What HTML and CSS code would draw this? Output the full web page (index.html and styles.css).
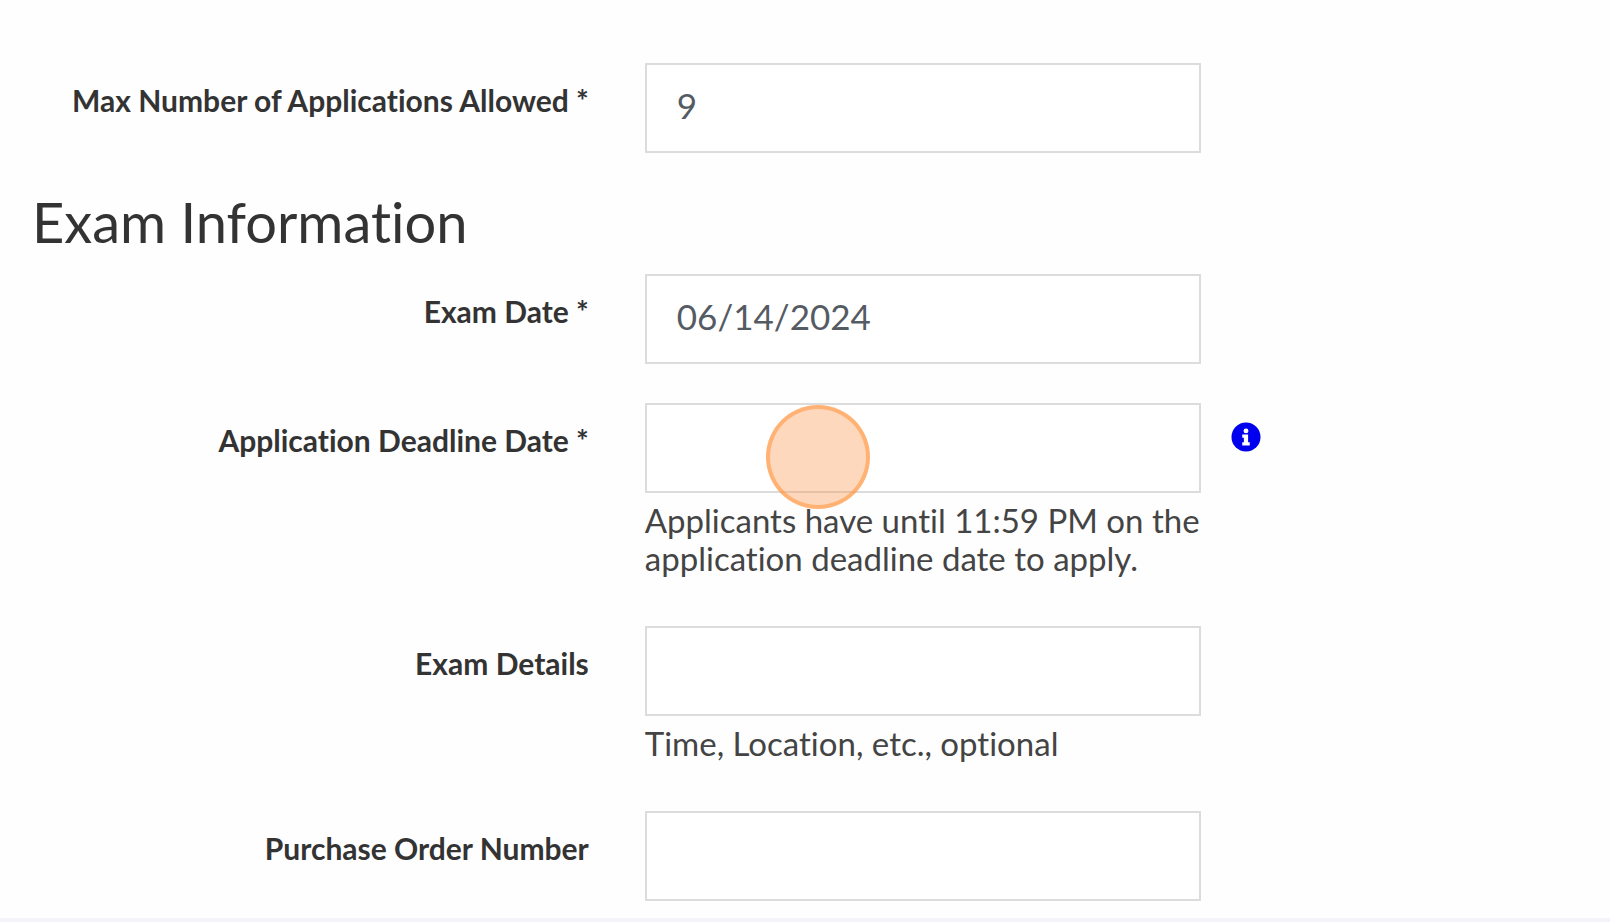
FILE: index.html
```html
<!DOCTYPE html>
<html lang="en">
<head>
    <meta charset="UTF-8">
    <title>Exam Information</title>
    <link rel="stylesheet" href="styles.css">
</head>
<body>
<form class="exam-form">
    <div class="row">
        <label for="max-apps">Max Number of Applications Allowed *</label>
        <div class="field">
            <input type="text" id="max-apps" value="9">
        </div>
    </div>

    <h2>Exam Information</h2>

    <div class="row">
        <label for="exam-date">Exam Date *</label>
        <div class="field">
            <input type="text" id="exam-date" value="06/14/2024">
        </div>
    </div>
    <div class="row has-help">
        <label for="deadline">Application Deadline Date *</label>
        <div class="field">
            <input type="text" id="deadline" aria-describedby="deadline-help">
            <span class="click-marker"></span>
            <p class="help" id="deadline-help">Applicants have until 11:59 PM on the application deadline date to apply.</p>
        </div>
        <button type="button" class="info" aria-label="More information">
            <svg viewBox="0 0 512 512" width="30" height="30">
                <circle cx="256" cy="256" r="248" fill="#0000ee"/>
                <circle cx="256" cy="152" r="42" fill="#fff"/>
                <path fill="#fff" d="M192 214h100v130h28v56H192v-56h28v-74h-28z"/>
            </svg>
        </button>
    </div>
    <div class="row has-help">
        <label for="details">Exam Details</label>
        <div class="field">
            <input type="text" id="details" aria-describedby="details-help">
            <p class="help" id="details-help">Time, Location, etc., optional</p>
        </div>
    </div>
    <div class="row">
        <label for="po-number">Purchase Order Number</label>
        <div class="field">
            <input type="text" id="po-number">
        </div>
    </div>
</form>
<div class="footer"></div>
</body>
</html>
```

FILE: styles.css
```css
* {
    margin: 0;
    padding: 0;
    box-sizing: border-box;
}

body {
    min-height: 100vh;
    display: flex;
    flex-direction: column;
    background-color: #fefefe;
    color: #333;
    font-family: Lato, "Open Sans", sans-serif;
    font-variant-ligatures: none;
}

.exam-form {
    flex: 1;
    padding-top: 63px;
}

.row {
    display: grid;
    grid-template-columns: minmax(0, 161fr) minmax(0, 139fr) minmax(0, 102fr);
    align-items: start;
    margin-bottom: 39px;
}

.row:last-child {
    margin-bottom: 14px;
}

.has-help {
    margin-bottom: 49px;
}

label {
    padding: 18px 56px 0 32px;
    font-size: 30px;
    line-height: 38px;
    font-weight: 700;
    text-align: right;
}

.field {
    position: relative;
}

input {
    display: block;
    width: 100%;
    height: 90px;
    padding: 0 30px 6px;
    border: 2px solid #dcdcdc;
    background-color: #fff;
    color: #555b63;
    font-family: inherit;
    font-size: 35px;
}

h2 {
    margin: -5px 32px 17px;
    font-size: 56px;
    line-height: 70px;
    font-weight: 400;
}

.help {
    margin-top: 8px;
    color: #444;
    font-size: 33px;
    line-height: 38px;
}

.info {
    margin: 19px 0 0 30px;
    width: 30px;
    height: 30px;
    border: none;
    background: none;
    cursor: pointer;
}

.info svg {
    display: block;
}

.click-marker {
    position: absolute;
    top: 2px;
    left: 121px;
    width: 104px;
    height: 104px;
    border: 4px solid rgba(255, 145, 55, 0.55);
    border-radius: 50%;
    background-color: rgba(252, 148, 70, 0.36);
    pointer-events: none;
}

.footer {
    height: 4px;
    background-color: #f2f4fa;
}
```
